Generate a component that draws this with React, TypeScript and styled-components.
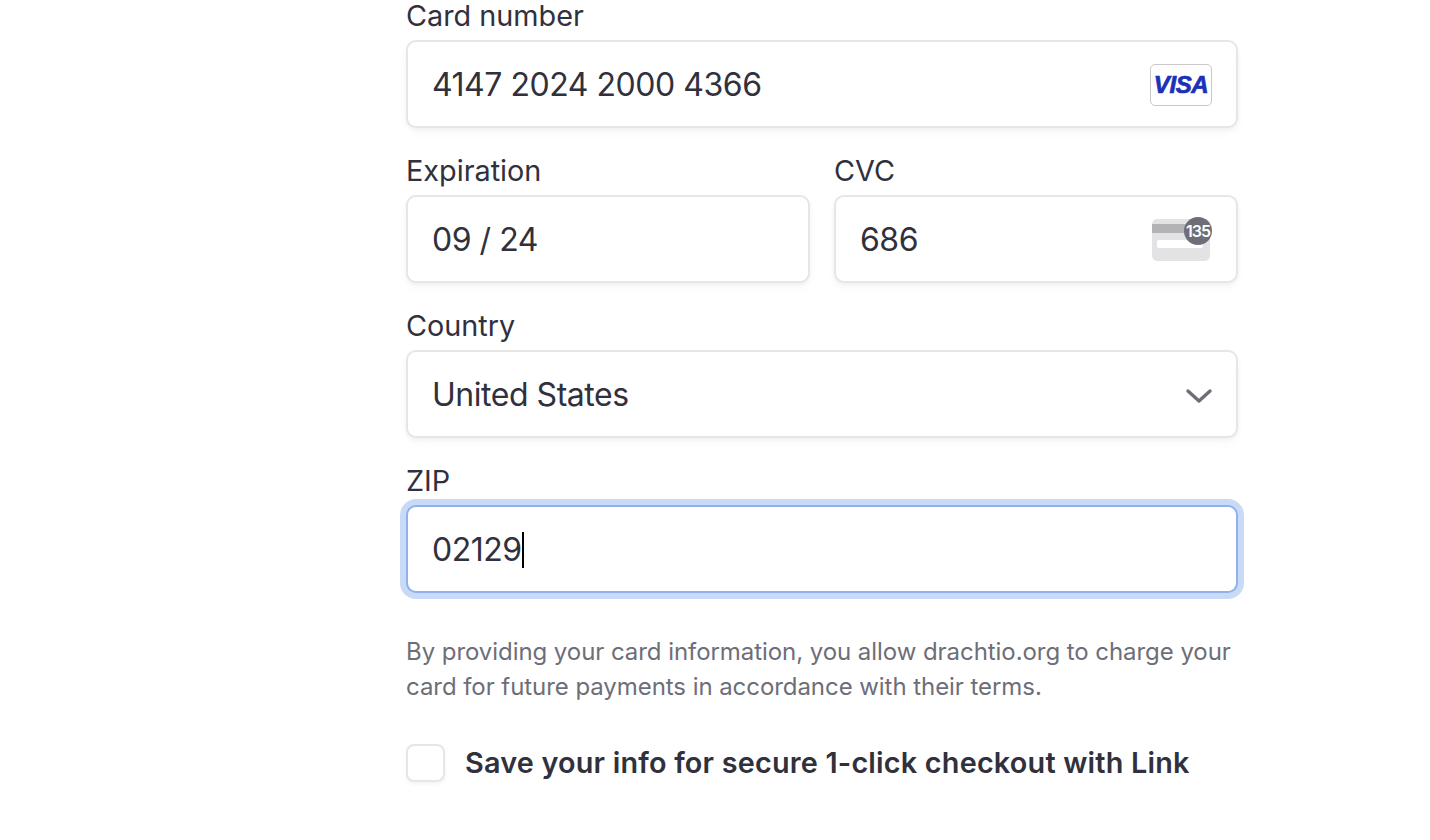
import React from "react";
import styled, { createGlobalStyle } from "styled-components";

const GlobalStyle = createGlobalStyle`
  html, body {
    margin: 0;
    padding: 0;
    background: #ffffff;
    font-family: Inter, "Noto Sans", sans-serif;
    overflow: hidden;
  }
`;

const App = () => {
  return (
    <>
      <GlobalStyle />
      <Page>
        <Form>
          <Field>
            <Label>Card number</Label>
            <InputBox>
              <Value>4147 2024 2000 4366</Value>
              <VisaBadge>VISA</VisaBadge>
            </InputBox>
          </Field>

          <Row>
            <Field>
              <Label>Expiration</Label>
              <InputBox>
                <Value>09 / 24</Value>
              </InputBox>
            </Field>
            <Field>
              <Label>CVC</Label>
              <InputBox>
                <Value>686</Value>
                <CvcIcon>
                  <svg width="58" height="42" viewBox="0 0 58 42">
                    <rect width="58" height="42" rx="5" fill="#e3e3e5" />
                    <rect y="5" width="58" height="9" fill="#b3b3b6" />
                    <rect x="5" y="21" width="46" height="8" rx="2" fill="#ffffff" />
                  </svg>
                  <CvcBubble>135</CvcBubble>
                </CvcIcon>
              </InputBox>
            </Field>
          </Row>

          <Field>
            <Label>Country</Label>
            <InputBox>
              <Value>United States</Value>
              <Chevron width="28" height="18" viewBox="0 0 28 18">
                <path d="M3 4l11 10L25 4" fill="none" stroke="#6d6e78" strokeWidth="3.4" strokeLinecap="round" strokeLinejoin="round" />
              </Chevron>
            </InputBox>
          </Field>

          <Field>
            <Label>ZIP</Label>
            <InputBox $focused>
              <Value>02129</Value>
              <Caret />
            </InputBox>
          </Field>

          <Terms>
            By providing your card information, you allow drachtio.org to charge
            your card for future payments in accordance with their terms.
          </Terms>

          <SaveRow>
            <CheckBox />
            <SaveText>Save your info for secure 1-click checkout with Link</SaveText>
          </SaveRow>
        </Form>
      </Page>
    </>
  );
};

export default App;

const Page = styled.div`
  width: 1430px;
  height: 840px;
  display: flex;
  padding-left: 406px;
  box-sizing: border-box;
`;

const Form = styled.div`
  width: 832px;
  display: flex;
  flex-direction: column;
  gap: 27px;
`;

const Row = styled.div`
  display: grid;
  grid-template-columns: 404px 404px;
  gap: 24px;
`;

const Field = styled.div`
  display: flex;
  flex-direction: column;
  gap: 8px;
`;

const Label = styled.div`
  height: 32px;
  line-height: 32px;
  font-size: 28.8px;
  color: #30313d;
`;

const InputBox = styled.div<{ $focused?: boolean }>`
  height: 88px;
  box-sizing: border-box;
  display: flex;
  align-items: center;
  padding: 1px 24px 0;
  background: #ffffff;
  border-radius: 10px;
  border: 2px solid ${(p) => (p.$focused ? "#8fb1ec" : "#e6e6e6")};
  box-shadow: ${(p) =>
    p.$focused
      ? "0 0 0 6px #c9daf6"
      : "0 2px 4px rgba(0, 0, 0, 0.05), 0 6px 12px rgba(0, 0, 0, 0.02)"};
`;

const Value = styled.span`
  flex: 0 1 auto;
  font-size: 32px;
  letter-spacing: -0.47px;
  color: #30313d;
`;

const VisaBadge = styled.span`
  margin-left: auto;
  margin-top: 1px;
  width: 62px;
  height: 42px;
  box-sizing: border-box;
  display: flex;
  align-items: center;
  justify-content: center;
  border: 1.5px solid #c9c9cc;
  border-radius: 5px;
  font-family: "Liberation Sans", Arial, sans-serif;
  font-size: 24px;
  font-weight: 700;
  font-style: italic;
  letter-spacing: -0.4px;
  -webkit-text-stroke: 0.7px #1a31b8;
  color: #1a31b8;
`;

const CvcIcon = styled.span`
  margin-left: auto;
  position: relative;
  display: flex;
  width: 60px;
  height: 42px;
`;

const CvcBubble = styled.span`
  position: absolute;
  top: -2px;
  right: 0;
  width: 28px;
  height: 28px;
  border-radius: 50%;
  background: #6d6e78;
  color: #ffffff;
  font-size: 16px;
  font-weight: 600;
  letter-spacing: -1px;
  display: flex;
  align-items: center;
  justify-content: center;
`;

const Chevron = styled.svg`
  margin-left: auto;
  margin-right: -1px;
  margin-top: 3px;
`;

const Caret = styled.span`
  width: 2px;
  height: 36px;
  background: #000000;
`;

const Terms = styled.p`
  margin: 14px 0 0;
  font-size: 24px;
  line-height: 35px;
  letter-spacing: -0.06px;
  color: #6d6e78;
`;

const SaveRow = styled.div`
  display: flex;
  align-items: center;
  gap: 20px;
  margin-top: 13px;
`;

const CheckBox = styled.span`
  width: 39px;
  height: 38px;
  box-sizing: border-box;
  background: #ffffff;
  border: 2px solid #e6e6e6;
  border-radius: 8px;
  box-shadow: 0 2px 4px rgba(0, 0, 0, 0.05);
`;

const SaveText = styled.span`
  font-size: 28.8px;
  font-weight: 600;
  letter-spacing: 0.2px;
  color: #30313d;
  margin-top: -2px;
`;
